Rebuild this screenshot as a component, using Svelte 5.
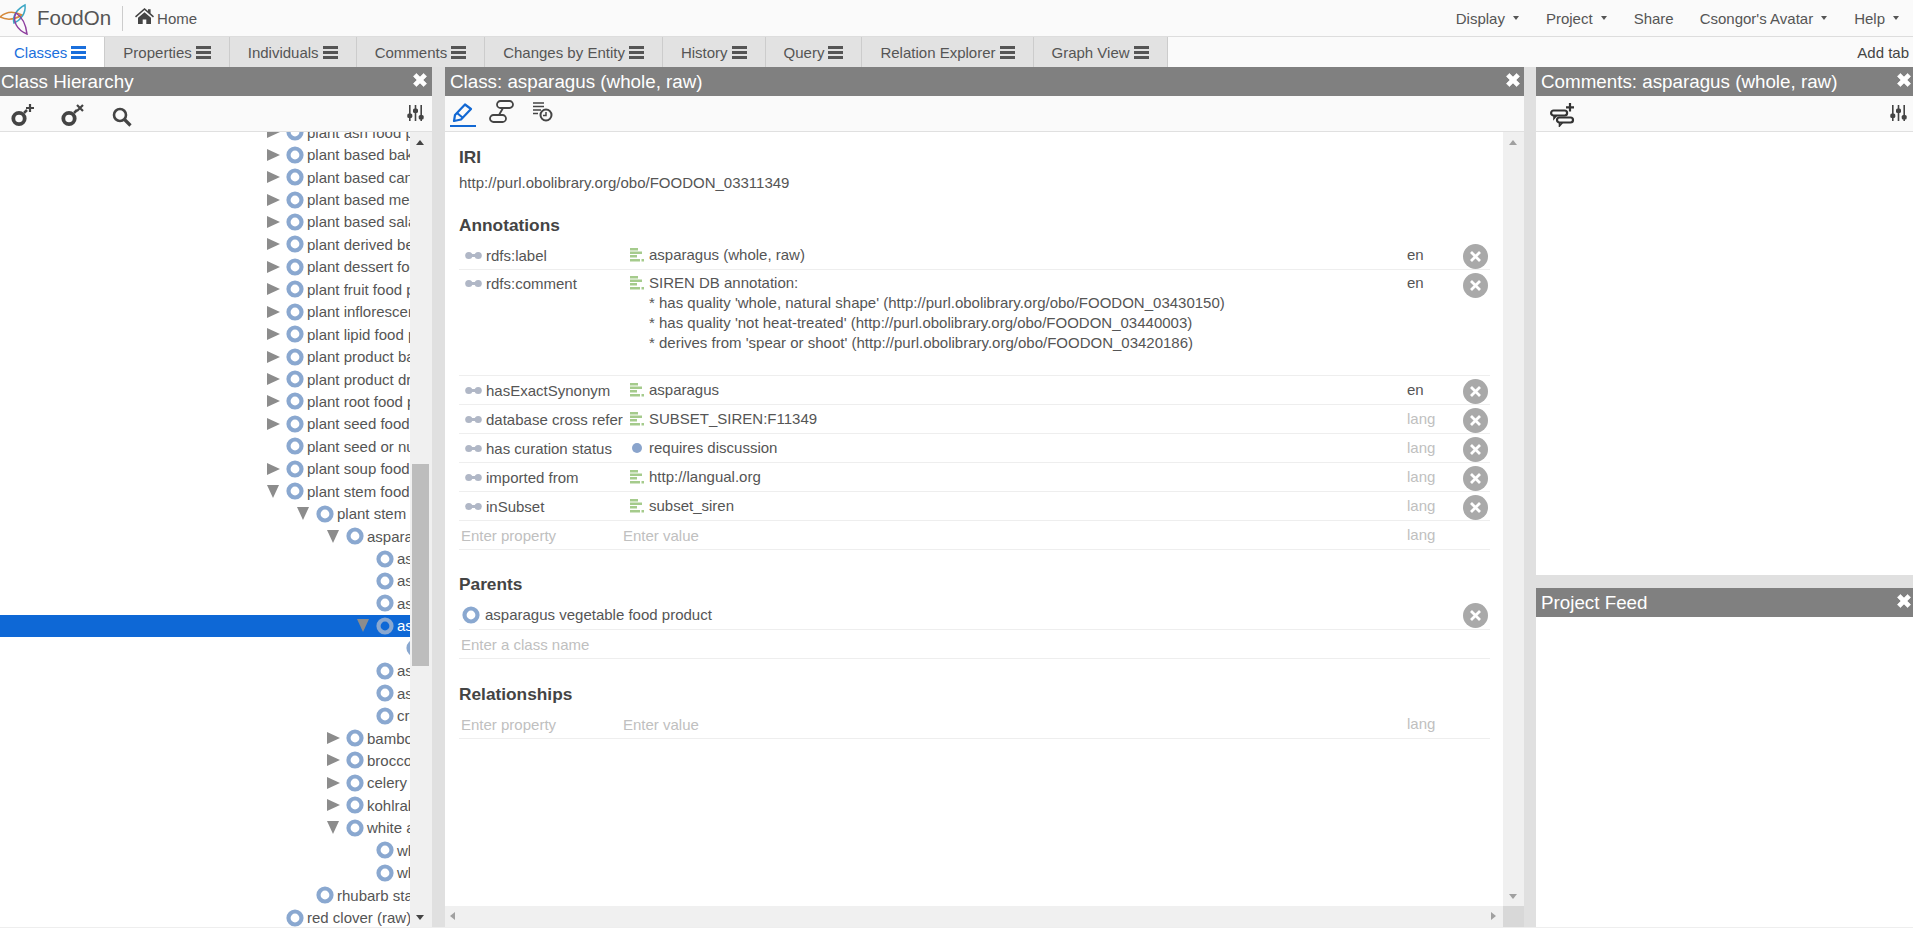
<script lang="ts">
	const nav = [
		{ label: 'Display', caret: true },
		{ label: 'Project', caret: true },
		{ label: 'Share', caret: false },
		{ label: "Csongor's Avatar", caret: true },
		{ label: 'Help', caret: true }
	];
	const tabs = ['Classes', 'Properties', 'Individuals', 'Comments', 'Changes by Entity', 'History', 'Query', 'Relation Explorer', 'Graph View'];

	// l: indent depth, o: open state, null means leaf
	const tree = [
		{ t: 'plant ash food product', l: 0, o: false },
		{ t: 'plant based bakery food', l: 0, o: false },
		{ t: 'plant based candy', l: 0, o: false },
		{ t: 'plant based meat', l: 0, o: false },
		{ t: 'plant based salad', l: 0, o: false },
		{ t: 'plant derived beverage', l: 0, o: false },
		{ t: 'plant dessert food', l: 0, o: false },
		{ t: 'plant fruit food product', l: 0, o: false },
		{ t: 'plant inflorescence', l: 0, o: false },
		{ t: 'plant lipid food product', l: 0, o: false },
		{ t: 'plant product based', l: 0, o: false },
		{ t: 'plant product dried', l: 0, o: false },
		{ t: 'plant root food product', l: 0, o: false },
		{ t: 'plant seed food product', l: 0, o: false },
		{ t: 'plant seed or nut', l: 0, o: null },
		{ t: 'plant soup food product', l: 0, o: false },
		{ t: 'plant stem food product', l: 0, o: true },
		{ t: 'plant stem vegetable', l: 1, o: true },
		{ t: 'asparagus vegetable food product', l: 2, o: true },
		{ t: 'asparagus (canned)', l: 3, o: null },
		{ t: 'asparagus (frozen)', l: 3, o: null },
		{ t: 'asparagus (peeled)', l: 3, o: null },
		{ t: 'asparagus (whole, raw)', l: 3, o: true, sel: true },
		{ t: 'asparagus spear', l: 4, o: null },
		{ t: 'asparagus (cooked)', l: 3, o: null },
		{ t: 'asparagus (dried)', l: 3, o: null },
		{ t: 'cress', l: 3, o: null },
		{ t: 'bamboo shoot', l: 2, o: false },
		{ t: 'broccoli stem', l: 2, o: false },
		{ t: 'celery stalk', l: 2, o: false },
		{ t: 'kohlrabi', l: 2, o: false },
		{ t: 'white asparagus', l: 2, o: true },
		{ t: 'white asparagus (raw)', l: 3, o: null },
		{ t: 'white asparagus (canned)', l: 3, o: null },
		{ t: 'rhubarb stalk', l: 1, o: null },
		{ t: 'red clover (raw)', l: 0, o: null }
	];

	const annotations = [
		{ prop: 'rdfs:label', value: ['asparagus (whole, raw)'], lang: 'en', icon: 'lit' },
		{
			prop: 'rdfs:comment',
			value: [
				'SIREN DB annotation:',
				"* has quality 'whole, natural shape' (http://purl.obolibrary.org/obo/FOODON_03430150)",
				"* has quality 'not heat-treated' (http://purl.obolibrary.org/obo/FOODON_03440003)",
				"* derives from 'spear or shoot' (http://purl.obolibrary.org/obo/FOODON_03420186)"
			],
			lang: 'en',
			icon: 'lit'
		},
		{ prop: 'hasExactSynonym', value: ['asparagus'], lang: 'en', icon: 'lit' },
		{ prop: 'database cross reference', value: ['SUBSET_SIREN:F11349'], lang: '', icon: 'lit' },
		{ prop: 'has curation status', value: ['requires discussion'], lang: '', icon: 'ind' },
		{ prop: 'imported from', value: ['http://langual.org'], lang: '', icon: 'lit' },
		{ prop: 'inSubset', value: ['subset_siren'], lang: '', icon: 'lit' }
	];
</script>

{#snippet bars()}
	<svg class="bars" width="15" height="13" viewBox="0 0 15 13"><path d="M0 0h15v3H0zM0 5h15v3H0zM0 10h15v3H0z" fill="currentColor" /></svg>
{/snippet}

{#snippet close()}
	<svg class="close" width="14" height="14" viewBox="0 0 14 14"><path d="M3.4 0.4 7 4 10.6 0.4 13.6 3.4 10 7 13.6 10.6 10.6 13.6 7 10 3.4 13.6 0.4 10.6 4 7 0.4 3.4Z" fill="#fff" stroke="#fff" stroke-width="0.6" stroke-linejoin="round" /></svg>
{/snippet}

{#snippet sliders()}
	<svg width="17" height="17" viewBox="0 0 17 17" fill="#444">
		<path d="M2 0h1.6v16H2zM7.700 0h1.600v16H7.700zM13.400 0h1.600v16h-1.600z" />
		<rect x="0.300" y="8.500" width="5" height="4.500" rx="1.600" />
		<rect x="6" y="3.500" width="5" height="4.500" rx="1.600" />
		<rect x="11.700" y="10" width="5" height="4.500" rx="1.600" />
	</svg>
{/snippet}

{#snippet ring()}
	<svg class="ring" width="18" height="18" viewBox="0 0 18 18"><circle cx="9" cy="9" r="6.500" fill="none" stroke="#8aa8d0" stroke-width="4.200" /></svg>
{/snippet}

{#snippet propIcon()}
	<svg class="prop-icon" width="17" height="9" viewBox="0 0 17 9" fill="#b0b7c6"><circle cx="3.800" cy="4.500" r="3.600" /><circle cx="13.200" cy="4.500" r="3.600" /><rect x="4" y="3" width="9" height="3" /></svg>
{/snippet}

{#snippet litIcon()}
	<svg class="val-icon" width="14" height="14" viewBox="0 0 14 14" fill="#a5cb8c"><path d="M0 0h8v2.500H0zM0 3.500h12v2.500H0zM0 7h7v2.500H0zM0 11h10v2.500H0zM11.500 11h2.500v2.500h-2.500z" /></svg>
{/snippet}

{#snippet delBtn()}
	<span class="del"><svg width="25" height="25" viewBox="0 0 25 25"><circle cx="12.500" cy="12.500" r="12.500" fill="#a9a9a9" /><path d="M8 8l9 9M17 8l-9 9" stroke="#fff" stroke-width="2.800" /></svg></span>
{/snippet}

<div class="page">
	<header class="topbar">
		<svg class="logo" width="30" height="33" viewBox="0 0 30 33" fill="none" stroke-width="1.500">
			<path d="M0 15C6 9.500 14 9 22 13 14 18 6 18 0 15Z" stroke="#d58a3c" />
			<path d="M25 3C17 7 12 14 14 21 21 18 26 11 25 3Z" stroke="#3ba6c4" />
			<path d="M27 32C26 23 22 15 16 11 12 19 17 28 27 32Z" stroke="#8e3f9e" />
		</svg>
		<span class="brand">FoodOn</span>
		<span class="divider"></span>
		<svg class="home" width="19" height="16" viewBox="0 0 19 16" fill="#444"><path d="M9.500 0 13 3V1.200h2.600v4.100L19 8.300l-1 1.100-8.500-7.300L1 9.400 0 8.300ZM3 9.700 9.500 4.200 16 9.700V16h-4.700v-4.500H7.700V16H3Z" /></svg>
		<span class="home-text">Home</span>
		<nav class="nav">
			{#each nav as item}
				<span class="nav-item">{item.label}{#if item.caret}<i class="caret"></i>{/if}</span>
			{/each}
		</nav>
	</header>

	<div class="tabbar">
		{#each tabs as tab, i}
			<div class="tab" class:active={i === 0}>{tab} {@render bars()}</div>
		{/each}
		<span class="add-tab">Add tab</span>
	</div>

	<div class="workspace">
		<section class="panel left">
			<div class="panel-head"><span>Class Hierarchy</span>{@render close()}</div>
			<div class="toolbar">
				<svg class="tool" width="25" height="24" viewBox="0 0 25 24" fill="none" stroke="#444">
					<circle cx="8" cy="15.500" r="5.700" stroke-width="3.800" />
					<path d="M13 10 16 7" stroke-width="2.500" />
					<path d="M19 1v8M15 5h8" stroke-width="2.200" />
				</svg>
				<svg class="tool t2" width="25" height="24" viewBox="0 0 25 24" fill="none" stroke="#444">
					<circle cx="8" cy="15.500" r="5.700" stroke-width="3.800" />
					<path d="M13 10 16 7" stroke-width="2.500" />
					<path d="M16 2l6 6M22 2l-6 6" stroke-width="2.200" />
				</svg>
				<svg class="tool t3" width="20" height="22" viewBox="0 0 20 22" fill="none" stroke="#444"><circle cx="8" cy="10" r="6" stroke-width="2.600" /><path d="M12.500 14.500 18.500 20.500" stroke-width="3.200" /></svg>
				<span class="tool-end">{@render sliders()}</span>
			</div>
			<div class="tree-wrap">
				<div class="tree">
					{#each tree as row}
						<div class="tree-row" class:sel={row.sel} style="padding-left: {row.l * 30 + 266}px">
							<span class="arrow">
								{#if row.o === true}<i class="tri-down"></i>{:else if row.o === false}<i class="tri-right"></i>{/if}
							</span>
							{@render ring()}
							<span class="tree-label">{row.t}</span>
						</div>
					{/each}
				</div>
				<div class="vscroll tree-scroll">
					<i class="sc-up dark"></i>
					<div class="thumb"></div>
					<i class="sc-down dark"></i>
				</div>
			</div>
		</section>

		<section class="panel center">
			<div class="panel-head"><span>Class: asparagus (whole, raw)</span>{@render close()}</div>
			<div class="toolbar center-tools">
				<span class="view-tab on">
					<svg width="22" height="22" viewBox="0 0 22 22" fill="none" stroke="#1268d3" stroke-width="2.200" stroke-linejoin="round"><path d="M3 14 13 3.500 19 8 9 18.500 2 20Z" /><path d="M5 12 10.500 16.500" /></svg>
				</span>
				<span class="view-tab second">
					<svg width="26" height="24" viewBox="0 0 26 24" fill="none" stroke="#444" stroke-width="1.800"><rect x="8" y="1" width="16" height="7" rx="3.500" /><rect x="1" y="15" width="16" height="7" rx="3.500" /><path d="M14 8 10 15" /></svg>
				</span>
				<span class="view-tab last">
					<svg width="20" height="22" viewBox="0 0 20 22" fill="none" stroke="#444"><path d="M0 2h11M0 5.500h11M0 9h8M0 12.500h5" stroke-width="1.700" /><circle cx="13" cy="14" r="5.500" stroke-width="2" /><path d="M13 11v3.500h-3" stroke-width="1.500" /></svg>
				</span>
			</div>
			<div class="center-body">
				<div class="form">
					<h3 class="first">IRI</h3>
					<p class="iri">http://purl.obolibrary.org/obo/FOODON_03311349</p>
					<h3 class="ann-head">Annotations</h3>
					<div class="grid-rows">
						{#each annotations as a, i}
							<div class="row" class:tall={i === 1}>
								<div class="prop">{@render propIcon()}<span class="prop-text">{a.prop}</span></div>
								<div class="val">
									{#if a.icon === 'lit'}{@render litIcon()}{:else}<i class="dot"></i>{/if}
									<div class="val-text">
										{#each a.value as line}
											<div>{line}</div>
										{/each}
									</div>
								</div>
								<div class="lang" class:hint={!a.lang}>{a.lang || 'lang'}</div>
								{@render delBtn()}
							</div>
						{/each}
						<div class="row entry">
							<div class="hint prop-in">Enter property</div>
							<div class="hint val-in">Enter value</div>
							<div class="lang hint">lang</div>
						</div>
					</div>
					<h3 class="parents-head">Parents</h3>
					<div class="row parent">
						<div class="parent-name">{@render ring()}<span>asparagus vegetable food product</span></div>
						{@render delBtn()}
					</div>
					<div class="row entry"><div class="hint prop-in">Enter a class name</div></div>
					<h3 class="rel-head">Relationships</h3>
					<div class="row entry rel-entry">
						<div class="hint prop-in">Enter property</div>
						<div class="hint val-in">Enter value</div>
						<div class="lang hint">lang</div>
					</div>
				</div>
				<div class="vscroll">
					<i class="sc-up"></i>
					<i class="sc-down"></i>
				</div>
			</div>
			<div class="hscroll">
				<i class="sc-left"></i>
				<i class="sc-right"></i>
				<span class="corner"></span>
			</div>
		</section>

		<div class="right">
			<section class="panel comments">
				<div class="panel-head"><span>Comments: asparagus (whole, raw)</span>{@render close()}</div>
				<div class="toolbar">
					<svg class="comment-add" width="26" height="24" viewBox="0 0 26 24" fill="none" stroke="#333" stroke-width="2.200">
						<rect x="1.100" y="7.500" width="16" height="5" rx="2.500" />
						<path d="M4 12.500v3l2.500-3" stroke-width="1.600" />
						<rect x="7" y="14.500" width="16" height="5" rx="2.500" />
						<path d="M9.500 19.500v3.500l3-3.500" stroke-width="1.600" />
						<path d="M20 0v8.500M16 4.300h8" />
					</svg>
					<span class="tool-end">{@render sliders()}</span>
				</div>
				<div class="blank"></div>
			</section>
			<section class="panel feed">
				<div class="panel-head"><span>Project Feed</span>{@render close()}</div>
				<div class="blank"></div>
			</section>
		</div>
	</div>
</div>

<style>
	:global(body) {
		margin: 0;
		background: #fff;
		font-family: 'Liberation Sans', Arial, sans-serif;
		color: #555;
		overflow: hidden;
	}

	.page {
		width: 1913px;
		height: 939px;
		overflow: hidden;
		font-size: 15px;
	}

	.topbar {
		height: 37px;
		box-sizing: border-box;
		border-bottom: 1px solid #ddd;
		background: #fafafa;
		display: flex;
		align-items: center;
		font-size: 15px;
	}

	.logo {
		flex: none;
	}

	.brand {
		font-size: 20.500px;
		margin-left: 7px;
		color: #555;
	}

	.divider {
		width: 1px;
		height: 25px;
		background: #ccc;
		margin: 0 12px 0 11px;
	}

	.home {
		margin-bottom: 4px;
	}

	.home-text {
		margin-left: 3px;
	}

	.nav {
		margin-left: auto;
		display: flex;
		padding-right: 13px;
		gap: 26px;
	}

	.nav-item {
		display: flex;
		align-items: center;
	}

	.caret {
		margin-left: 8px;
		margin-right: 1px;
		border-left: 3px solid transparent;
		border-right: 3px solid transparent;
		border-top: 4px solid #555;
	}

	.tabbar {
		height: 30px;
		box-sizing: border-box;
		display: flex;
		background: #fafafa;
		font-size: 15px;
	}

	.tab {
		display: flex;
		align-items: center;
		gap: 4px;
		padding: 0 18px;
		background: #e2e2e2;
		border-right: 1px solid #ccc;
		white-space: nowrap;
		color: #555;
	}

	.tab.active {
		background: #fff;
		color: #1a6fdc;
		padding-left: 14px;
	}

	.bars {
		flex: none;
	}

	.add-tab {
		margin-left: auto;
		align-self: center;
		padding-right: 4px;
		color: #444;
	}

	.workspace {
		height: 860px;
		display: flex;
		background: #e0e0e0;
		border-bottom: 1px solid #eee;
	}

	.panel {
		display: flex;
		flex-direction: column;
		background: #fff;
		min-height: 0;
	}

	.left {
		width: 432px;
		margin-right: 13px;
	}

	.center {
		width: 1079px;
		margin-right: 12px;
	}

	.right {
		width: 377px;
		display: flex;
		flex-direction: column;
		gap: 13px;
	}

	.comments {
		height: 508px;
	}

	.feed {
		flex: 1;
	}

	.panel-head {
		height: 29px;
		flex: none;
		box-sizing: border-box;
		background: #808080;
		color: #fff;
		font-size: 18.800px;
		display: flex;
		align-items: center;
		justify-content: space-between;
		padding: 1px 2px 0 5px;
	}

	.left .panel-head {
		padding: 1px 5px 0 1px;
	}

	.center .panel-head {
		padding: 1px 4px 0 5px;
	}

	.close {
		margin-bottom: 4px;
	}

	.toolbar {
		height: 36px;
		flex: none;
		box-sizing: border-box;
		background: #fafafa;
		border-bottom: 1px solid #e0e0e0;
		display: flex;
		align-items: center;
		padding-left: 11px;
	}

	.tool {
		margin-top: 2px;
	}

	.t2 {
		margin-left: 25px;
	}

	.t3 {
		margin-left: 26px;
		margin-top: 4px;
	}

	.tool-end {
		margin-left: auto;
		margin-right: 8px;
		display: flex;
	}

	.comments .tool-end {
		margin-right: 6px;
	}

	.comments .toolbar {
		padding-left: 14px;
	}

	.comment-add {
		margin-top: 3px;
	}

	.tree-wrap {
		flex: 1;
		min-height: 0;
		display: flex;
		overflow: hidden;
	}

	.tree {
		width: 410px;
		flex: none;
		overflow: hidden;
		margin-top: -11px;
	}

	.tree-row {
		height: 22.450px;
		box-sizing: border-box;
		display: flex;
		align-items: center;
		white-space: nowrap;
		overflow: hidden;
	}

	.tree-row.sel {
		background: #0e68d6;
		color: #fff;
	}

	.arrow {
		width: 20px;
		flex: none;
		display: flex;
	}

	.ring {
		flex: none;
	}

	.tree-label {
		margin-left: 3px;
	}

	.tri-right {
		border-top: 6.500px solid transparent;
		border-bottom: 6.500px solid transparent;
		border-left: 13px solid #8c8c8c;
		margin-left: 1px;
	}

	.tri-down {
		border-left: 6.500px solid transparent;
		border-right: 6.500px solid transparent;
		border-top: 13px solid #8c8c8c;
		margin-left: 1px;
	}

	.vscroll {
		width: 21px;
		flex: none;
		background: #f0f0f0;
		position: relative;
	}

	.tree-scroll {
		width: 22px;
	}

	.thumb {
		position: absolute;
		left: 2px;
		right: 3px;
		top: 332px;
		height: 202px;
		background: #bdbdbd;
	}

	.sc-up,
	.sc-down,
	.sc-left,
	.sc-right {
		position: absolute;
		width: 0;
		height: 0;
		border: 4.500px solid transparent;
	}

	.sc-up {
		top: 8px;
		left: 6px;
		border-top: 0;
		border-bottom: 5px solid #a0a0a0;
	}

	.sc-down {
		bottom: 7px;
		left: 6px;
		border-bottom: 0;
		border-top: 5px solid #a0a0a0;
	}

	.sc-up.dark {
		border-bottom-color: #444;
	}

	.sc-down.dark {
		border-top-color: #444;
	}

	.center-tools {
		padding-left: 5px;
		align-items: flex-start;
	}

	.view-tab {
		width: 26px;
		height: 31px;
		display: flex;
		align-items: center;
		justify-content: center;
		margin-right: 11px;
		padding-top: 2px;
		box-sizing: border-box;
		border-bottom: 2px solid transparent;
	}

	.view-tab.second {
		margin-left: 2px;
	}

	.view-tab.last {
		margin-left: 4px;
	}

	.view-tab.on {
		border-bottom-color: #1268d3;
	}

	.center-body {
		flex: 1;
		min-height: 0;
		display: flex;
	}

	.form {
		flex: 1;
		min-width: 0;
		padding: 0 13px 0 14px;
	}

	h3 {
		margin: 0;
		font-size: 17.300px;
		font-weight: bold;
		color: #444;
		line-height: 20px;
	}

	.first {
		margin-top: 15px;
	}

	.iri {
		margin: 6px 0 0;
		line-height: 20px;
	}

	.ann-head {
		margin-top: 22px;
	}

	.grid-rows {
		margin-top: 6px;
	}

	.row {
		height: 29px;
		box-sizing: border-box;
		border-bottom: 1px solid #eee;
		display: flex;
		align-items: center;
		position: relative;
	}

	.row.tall {
		height: 106px;
		align-items: flex-start;
		padding-top: 3px;
	}

	.prop {
		width: 164px;
		flex: none;
		display: flex;
		align-items: center;
		padding-left: 6px;
		box-sizing: border-box;
		overflow: hidden;
		white-space: nowrap;
		height: 20px;
	}

	.prop-icon {
		flex: none;
		margin-right: 4px;
	}

	.val {
		flex: 1;
		display: flex;
		align-items: flex-start;
		min-width: 0;
		padding-left: 7px;
	}

	.val-icon {
		flex: none;
		margin-top: 3px;
	}

	.dot {
		width: 10px;
		height: 10px;
		margin: 5px 2px 0 2px;
		border-radius: 50%;
		background: #8aa4cc;
		flex: none;
	}

	.val-text {
		margin-left: 5px;
		line-height: 20px;
	}

	.lang {
		width: 83px;
		flex: none;
		line-height: 20px;
	}

	.hint {
		color: #c0c0c0;
	}

	.del {
		position: absolute;
		right: 2px;
		top: 3px;
		display: flex;
		height: 25px;
	}

	.prop-in {
		width: 164px;
		flex: none;
		padding-left: 2px;
		box-sizing: border-box;
	}

	.val-in {
		flex: 1;
	}

	.parents-head {
		margin-top: 24px;
	}

	.parent {
		margin-top: 6px;
		height: 30px;
	}

	.parent-name {
		display: flex;
		align-items: center;
		gap: 5px;
		padding-left: 3px;
	}

	.rel-head {
		margin-top: 25px;
	}

	.rel-entry {
		margin-top: 6px;
	}

	.hscroll {
		height: 21px;
		flex: none;
		background: #f0f0f0;
		position: relative;
	}

	.sc-left {
		left: 5px;
		top: 6px;
		border-left: 0;
		border-right: 5px solid #a0a0a0;
	}

	.sc-right {
		right: 28px;
		top: 6px;
		border-right: 0;
		border-left: 5px solid #a0a0a0;
	}

	.corner {
		position: absolute;
		right: 0;
		top: 0;
		bottom: 0;
		width: 21px;
		background: #d8d8d8;
	}

	.blank {
		flex: 1;
		background: #fff;
	}
</style>
